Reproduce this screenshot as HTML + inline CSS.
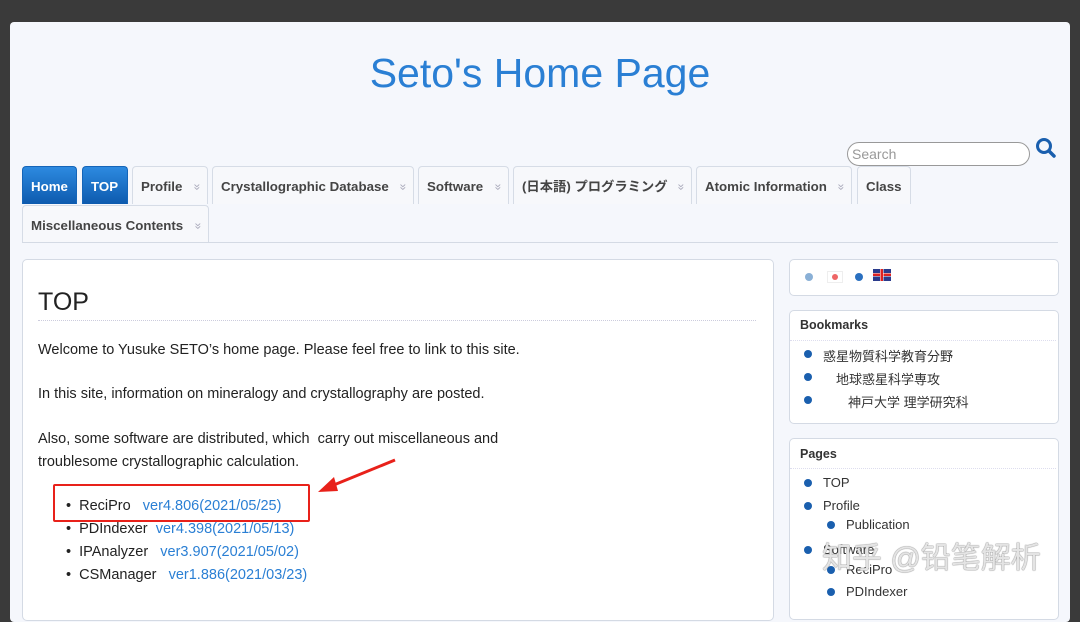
<!DOCTYPE html>
<html><head><meta charset="utf-8"><style>
body{margin:0;width:1080px;height:598px;overflow:hidden;background:#3a3a3a;font-family:"Liberation Sans","Noto Sans CJK JP",sans-serif;position:relative}
.abs{position:absolute}
#page{left:10px;top:22px;width:1060px;height:600px;background:#f5f7fc;border-radius:4px}
h1{position:absolute;left:0;width:1080px;top:50px;margin:0;text-align:center;font-weight:normal;font-size:41px;color:#2a7fd4}
.tab{position:absolute;height:38px;top:166px;background:#f7f8fb;border:1px solid #d6dce6;border-bottom:none;border-radius:4px 4px 0 0;font-weight:bold;font-size:13.3px;color:#444;line-height:40px;padding-left:8px;box-sizing:border-box}
.tab.b{background:linear-gradient(#2d8ae0,#0d5aae);color:#fff;border-color:#1565b8}
.tab .ch{position:absolute;right:6px;top:14px;color:#aab;font-size:12px;font-weight:normal;line-height:12px;transform:rotate(90deg)}
.box{position:absolute;background:#fff;border:1px solid #d4dae4;border-radius:5px}
.t{position:absolute;font-size:14.5px;color:#222;white-space:nowrap}
a{color:#2a7fd4;text-decoration:none}
.dot{position:absolute;width:8px;height:8px;border-radius:50%;background:#1a5fae}
.s{font-size:13px;color:#333}
</style></head><body>
<div id="page" class="abs"></div>
<h1>Seto's Home Page</h1>
<div class="abs" style="left:847px;top:142px;border:1px solid #999;border-radius:12px;background:#fff;font-size:14px;color:#999;line-height:22px;padding-left:4px;box-sizing:border-box;width:183px;height:24px">Search</div>
<svg class="abs" style="left:1035px;top:137px" width="22" height="22" viewBox="0 0 22 22"><circle cx="9" cy="9" r="6.5" fill="none" stroke="#1a5fae" stroke-width="3"/><path d="M14 14l5 5" stroke="#1a5fae" stroke-width="3.5" stroke-linecap="round"/></svg>
<div class="tab b" style="left:22px;width:55px">Home</div>
<div class="tab b" style="left:82px;width:46px">TOP</div>
<div class="tab" style="left:132px;width:76px">Profile<span class="ch">»</span></div>
<div class="tab" style="left:212px;width:202px">Crystallographic Database<span class="ch">»</span></div>
<div class="tab" style="left:418px;width:91px">Software<span class="ch">»</span></div>
<div class="tab" style="left:513px;width:179px">(日本語) プログラミング<span class="ch">»</span></div>
<div class="tab" style="left:696px;width:156px">Atomic Information<span class="ch">»</span></div>
<div class="tab" style="left:857px;width:54px">Class</div>
<div class="tab" style="left:22px;top:205px;width:187px">Miscellaneous Contents<span class="ch">»</span></div>
<div class="abs" style="left:22px;top:242px;width:1036px;height:1px;background:#d4dae4"></div>
<div class="box" style="left:22px;top:259px;width:750px;height:360px"></div>
<div class="t" style="left:38px;top:288px;font-size:25px">TOP</div>
<div class="abs" style="left:38px;top:320px;width:718px;border-top:1px dotted #ccd"></div>
<div class="t" style="left:38px;top:342px">Welcome to Yusuke SETO’s home page. Please feel free to link to this site.</div>
<div class="t" style="left:38px;top:386px">In this site, information on mineralogy and crystallography are posted.</div>
<div class="t" style="left:38px;top:431px">Also, some software are distributed, which &nbsp;carry out miscellaneous and</div>
<div class="t" style="left:38px;top:454px">troublesome crystallographic calculation.</div>
<div class="t" style="left:66px;top:498px">•&nbsp;&nbsp;ReciPro &nbsp;&nbsp;<a>ver4.806(2021/05/25)</a></div>
<div class="t" style="left:66px;top:521px">•&nbsp;&nbsp;PDIndexer &nbsp;<a>ver4.398(2021/05/13)</a></div>
<div class="t" style="left:66px;top:544px">•&nbsp;&nbsp;IPAnalyzer &nbsp;&nbsp;<a>ver3.907(2021/05/02)</a></div>
<div class="t" style="left:66px;top:567px">•&nbsp;&nbsp;CSManager &nbsp;&nbsp;<a>ver1.886(2021/03/23)</a></div>
<div class="abs" style="left:53px;top:484px;width:253px;height:34px;border:2.5px solid #e8211a;border-radius:2px"></div>
<svg class="abs" style="left:310px;top:455px" width="90" height="45"><path d="M85 5L14 34" stroke="#e8211a" stroke-width="3"/><path d="M8 37L24 22L28 36Z" fill="#e8211a"/></svg>
<div class="box" style="left:789px;top:259px;width:268px;height:35px"></div>
<div class="dot" style="left:805px;top:273px;background:#8ab0d6"></div>
<div class="abs" style="left:827px;top:271px;width:14px;height:10px;background:#fff;border:1px solid #eee"><div style="margin:2px 4px;width:6px;height:6px;border-radius:50%;background:#e66"></div></div>
<div class="dot" style="left:855px;top:273px;background:#2a70c0"></div>
<div class="abs" style="left:873px;top:269px;width:18px;height:12px;background:#2a3b8c;background-image:linear-gradient(90deg,transparent 7px,#fff 7px,#d22 8px,#d22 10px,#fff 10px,transparent 11px),linear-gradient(transparent 4px,#fff 4px,#d22 5px,#d22 7px,#fff 7px,transparent 8px)"></div>
<div class="box" style="left:789px;top:310px;width:268px;height:112px"></div>
<div class="t" style="left:800px;top:318px;font-size:12.5px;font-weight:bold;color:#333">Bookmarks</div>
<div class="abs" style="left:790px;top:340px;width:266px;border-top:1px dotted #dde"></div>
<div class="dot" style="left:804px;top:350px"></div><div class="t s" style="left:823px;top:346px">惑星物質科学教育分野</div>
<div class="dot" style="left:804px;top:373px"></div><div class="t s" style="left:836px;top:369px">地球惑星科学専攻</div>
<div class="dot" style="left:804px;top:396px"></div><div class="t s" style="left:848px;top:392px">神戸大学 理学研究科</div>
<div class="box" style="left:789px;top:438px;width:268px;height:180px"></div>
<div class="t" style="left:800px;top:447px;font-size:12.5px;font-weight:bold;color:#333">Pages</div>
<div class="abs" style="left:790px;top:468px;width:266px;border-top:1px dotted #dde"></div>
<div class="dot" style="left:804px;top:479px"></div><div class="t s" style="left:823px;top:475px">TOP</div>
<div class="dot" style="left:804px;top:502px"></div><div class="t s" style="left:823px;top:498px">Profile</div>
<div class="dot" style="left:827px;top:521px"></div><div class="t s" style="left:846px;top:517px">Publication</div>
<div class="dot" style="left:804px;top:546px"></div><div class="t s" style="left:823px;top:542px">Software</div>
<div class="dot" style="left:827px;top:566px"></div><div class="t s" style="left:846px;top:562px">ReciPro</div>
<div class="dot" style="left:827px;top:588px"></div><div class="t s" style="left:846px;top:584px">PDIndexer</div>
<div class="t" style="left:822px;top:533px;font-size:30px;color:rgba(255,255,255,.8);text-shadow:0 0 1px #777,0 0 1px #777">知乎 @铅笔解析</div>
</body></html>
